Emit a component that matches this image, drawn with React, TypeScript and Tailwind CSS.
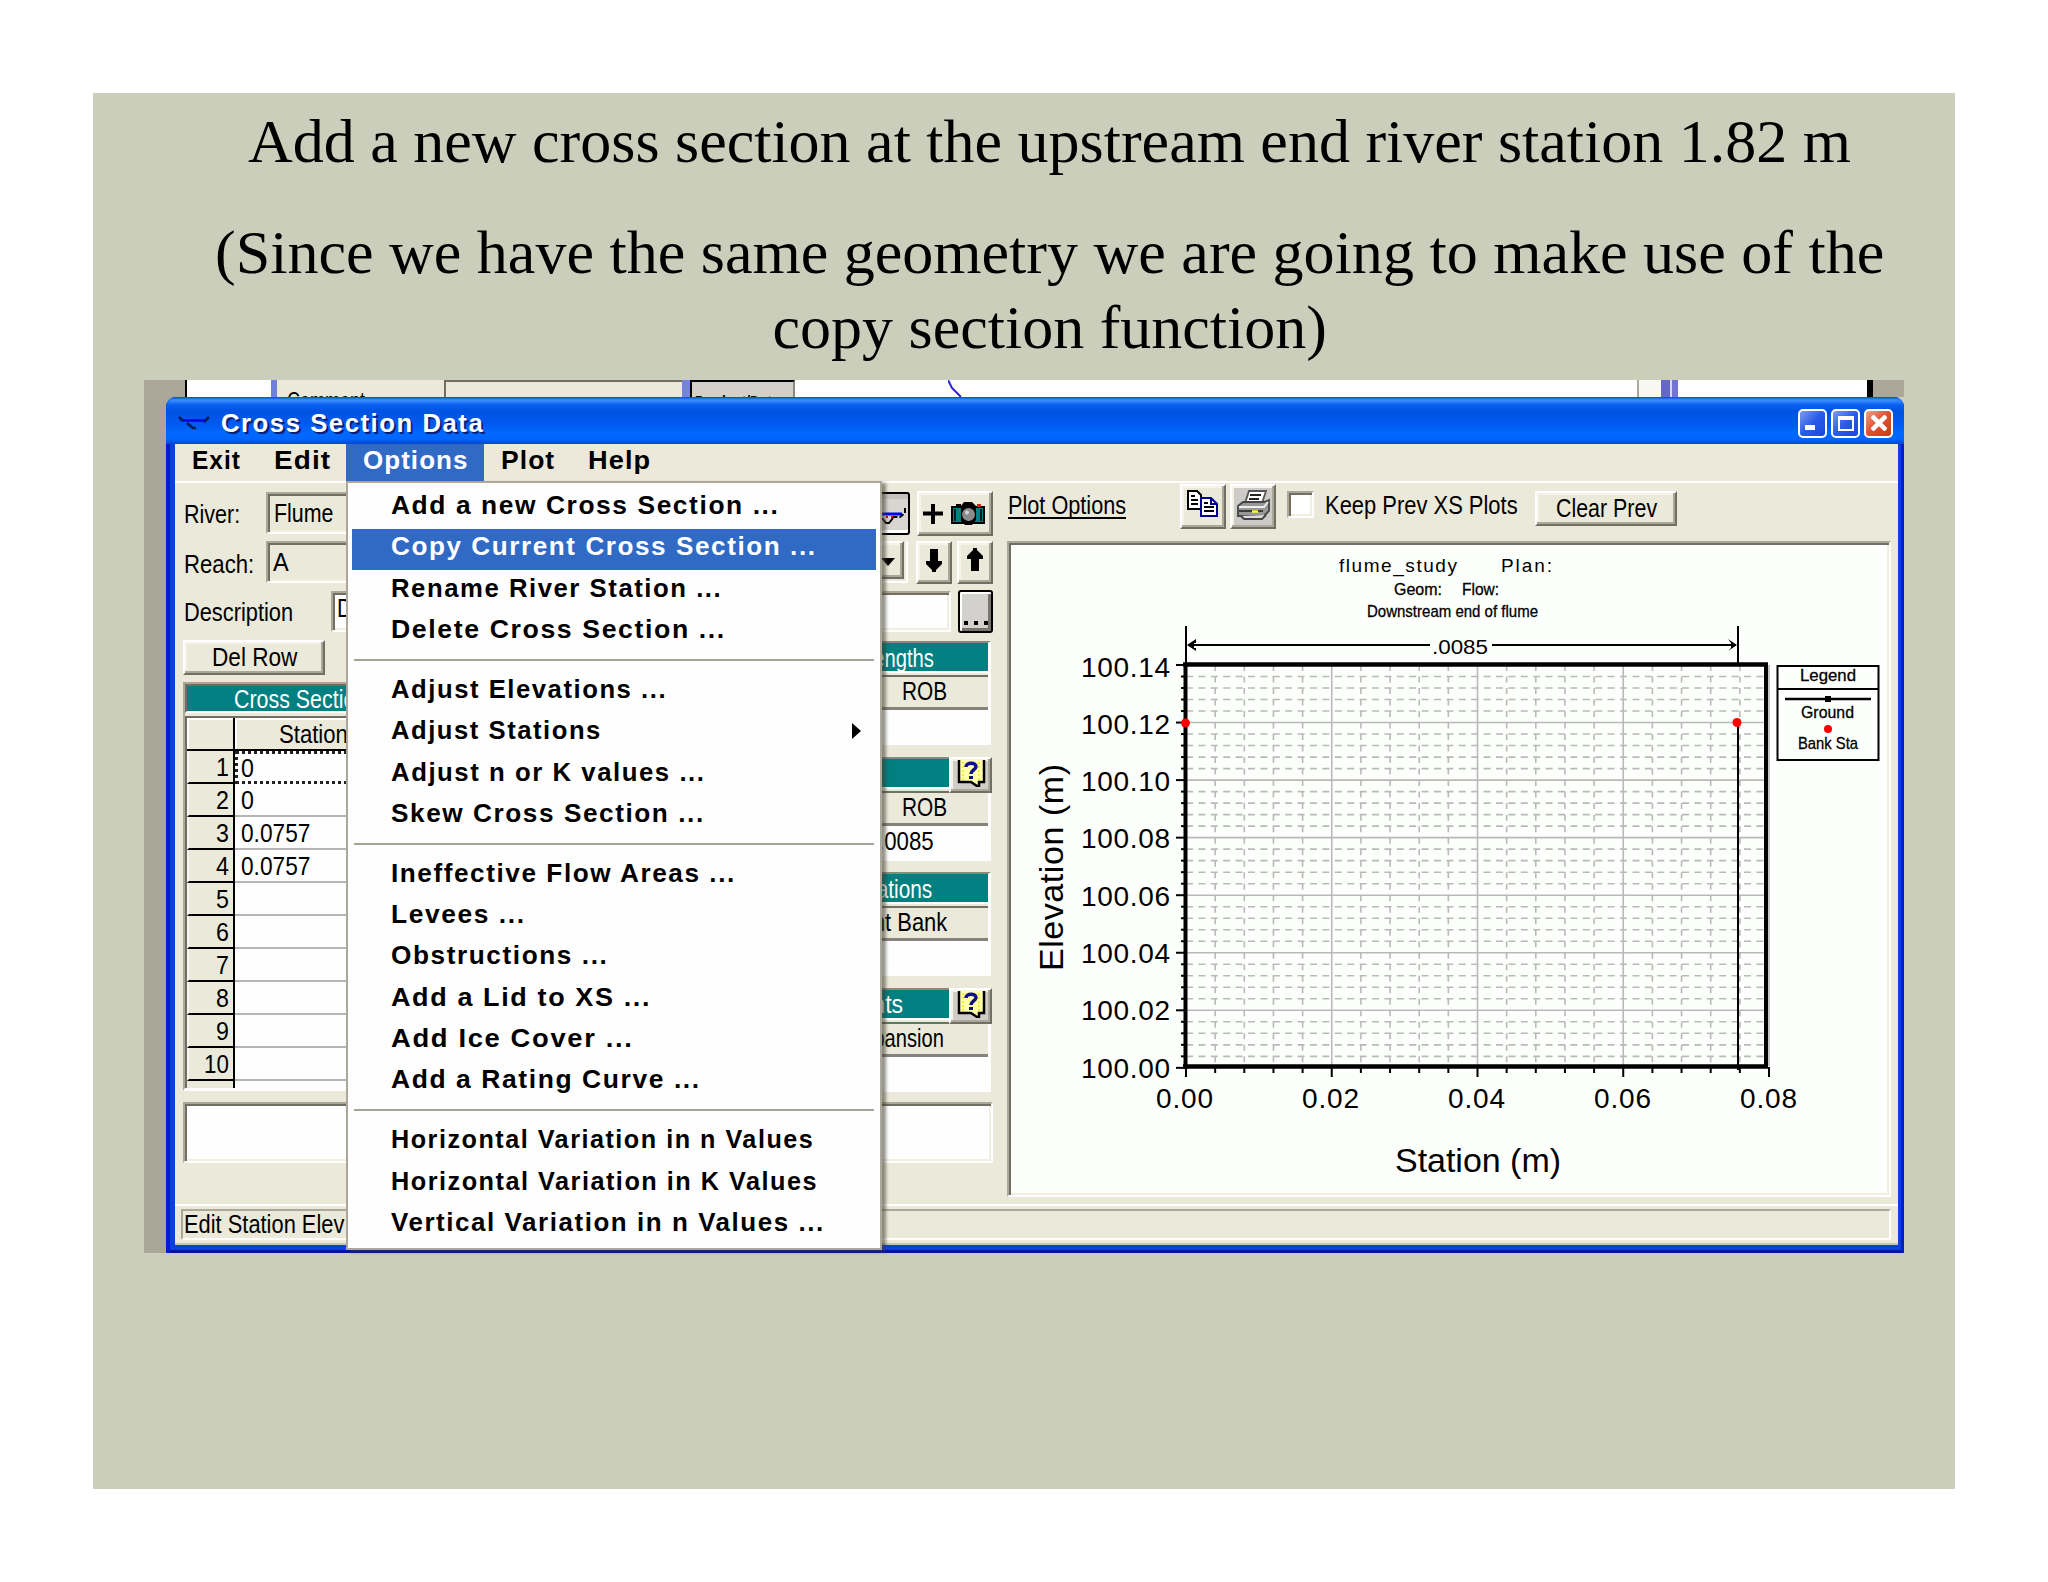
import React, { useLayoutEffect, useRef, useState } from 'react';

const sunken =
  'border-2 border-t-[#aca899] border-l-[#aca899] border-b-white border-r-white shadow-[inset_2px_2px_0_#716f64,inset_-2px_-2px_0_#f1efe2]';
const raised =
  'border-2 border-t-white border-l-white border-b-[#716f64] border-r-[#716f64] shadow-[inset_-2px_-2px_0_#aca899,inset_2px_2px_0_#f4f3e8]';

// Stretches one line of text to the width of its box
function Fit({ className, children }: { className: string; children: string }) {
  const box = useRef<HTMLSpanElement>(null);
  const inner = useRef<HTMLSpanElement>(null);
  const [scale, setScale] = useState(1);

  useLayoutEffect(() => {
    if (box.current && inner.current) {
      setScale(box.current.clientWidth / inner.current.offsetWidth);
    }
  }, []);

  return (
    <span ref={box} className={`block shrink-0 whitespace-pre leading-none ${className}`}>
      <span ref={inner} className="inline-block origin-left" style={{ transform: `scaleX(${scale})` }}>
        {children}
      </span>
    </span>
  );
}

const menuGroups = [
  [
    { label: 'Add a new Cross Section ...', width: 'w-[388px]' },
    { label: 'Copy Current Cross Section ...', width: 'w-[426px]', active: true },
    { label: 'Rename River Station ...', width: 'w-[331px]' },
    { label: 'Delete Cross Section ...', width: 'w-[335px]' },
  ],
  [
    { label: 'Adjust Elevations ...', width: 'w-[276px]' },
    { label: 'Adjust Stations', width: 'w-[211px]', submenu: true },
    { label: 'Adjust n or K values ...', width: 'w-[315px]' },
    { label: 'Skew Cross Section ...', width: 'w-[314px]' },
  ],
  [
    { label: 'Ineffective Flow Areas ...', width: 'w-[345px]' },
    { label: 'Levees ...', width: 'w-[135px]' },
    { label: 'Obstructions ...', width: 'w-[217px]' },
    { label: 'Add a Lid to XS ...', width: 'w-[260px]' },
    { label: 'Add Ice Cover ...', width: 'w-[242px]' },
    { label: 'Add a Rating Curve ...', width: 'w-[310px]' },
  ],
  [
    { label: 'Horizontal Variation in n Values', width: 'w-[423px]' },
    { label: 'Horizontal Variation in K Values', width: 'w-[427px]' },
    { label: 'Vertical Variation in n Values ...', width: 'w-[434px]' },
  ],
];

function OptionsMenu() {
  return (
    <div className="absolute left-[180px] top-[84px] h-[769px] w-[536px] border-2 border-[#aca899] bg-[#fefefe] px-[4px] pt-[4.500px] shadow-[4px_2px_3px_rgba(60,60,50,0.55)]">
      {menuGroups.map((group, i) => (
        <div key={i}>
          {i > 0 && (
            <div className="flex h-[18.7px] items-center px-[2px] pb-[4px]">
              <div className="h-[2px] w-full bg-[#a5a296]" />
            </div>
          )}
          {group.map((item) => (
            <div
              key={item.label}
              className={`flex h-[41.3px] items-center justify-between pb-[5px] pl-[39px] pr-[15px] text-[25px] font-bold tracking-[1.500px] ${item.active ? 'bg-[#316ac5] text-white' : 'text-black'}`}
            >
              <Fit className={item.width}>{item.label}</Fit>
              {item.submenu && (
                <svg width="9" height="16" viewBox="0 0 9 16">
                  <path d="M0 0L9 8L0 16Z" />
                </svg>
              )}
            </div>
          ))}
        </div>
      ))}
    </div>
  );
}

// Slice of the window that lies behind this one
function BackWindow() {
  return (
    <div className="flex h-[17px] w-full overflow-hidden bg-[#aca899] text-[24px]">
      <div className="w-[41px]" />
      <div className="w-[2px] bg-black" />
      <div className="w-[84px] bg-white" />
      <div className="w-[6px] bg-[#6f80dd]" />
      <div className="flex w-[167px] items-start bg-[#ebe9da] pl-[10px] pt-[9px]">
        <Fit className="w-[78px]">Comment</Fit>
      </div>
      <div className="w-[238px] border-l-2 border-t-2 border-[#716f64] bg-[#ebe9da]" />
      <div className="w-[8px] bg-[#7583dd]" />
      <div className="w-[105px] border-l-2 border-r-2 border-t-2 border-black border-r-[#8b897d] bg-[#d2d0c8] pl-[3px] pt-[11px] text-[20px] font-bold">
        <Fit className="w-[84px]">Product/Data</Fit>
      </div>
      <div className="w-[842px] bg-white pl-[153px]">
        <svg width="16" height="17" viewBox="0 0 16 17" fill="none">
          <path d="M0 0L4 8L13 17" stroke="#2a20d8" strokeWidth="2" />
        </svg>
      </div>
      <div className="w-[24px] border-l-2 border-[#aca899] bg-[#f8f8f2]" />
      <div className="w-[9px] bg-[#6468c8]" />
      <div className="w-[2px] bg-[#d8d8ec]" />
      <div className="w-[6px] bg-[#7474d4]" />
      <div className="w-[189px] bg-white" />
      <div className="w-[6px] bg-black" />
    </div>
  );
}

function TitleBar() {
  const button = 'flex h-[29px] w-[29px] items-center justify-center rounded-[5px] border-2 border-white';
  return (
    <div className="flex h-[47px] items-center rounded-t-[10px] bg-[linear-gradient(to_bottom,#0a4ad0_0,#3a90ff_3px,#0860f0_8px,#0053e1_14px,#0058ee_26px,#0068ff_36px,#0066fc_42px,#0046d0_47px)] pl-[12px] pr-[11px]">
      <svg width="32" height="14" viewBox="0 0 32 14" fill="none" stroke="#0a1b50" strokeWidth="2.500" className="mt-[5px]">
        <path d="M1 1L5 5M31 1L26 6M9 7L15 12H18" />
        <path d="M5 4.500H27" stroke="#0000e0" />
      </svg>
      <div className="ml-[11px] pt-[5px] text-[25px] font-bold tracking-[1.500px] text-white [text-shadow:2px_2px_0_#0a1f7a]">
        <Fit className="w-[263px]">Cross Section Data</Fit>
      </div>
      <div className="ml-auto flex gap-[4px] pt-[5px]">
        <div className={`${button} bg-[linear-gradient(135deg,#7f9cf0,#2a5be8_50%,#1848d8)]`}>
          <div className="mr-[6px] mt-[9px] h-[5px] w-[10px] bg-white" />
        </div>
        <div className={`${button} bg-[linear-gradient(135deg,#7f9cf0,#2a5be8_50%,#1848d8)]`}>
          <div className="h-[15px] w-[16px] border-2 border-t-4 border-white" />
        </div>
        <div className={`${button} bg-[linear-gradient(135deg,#f0a088,#e0502c_50%,#c83c18)]`}>
          <svg width="16" height="16" viewBox="0 0 16 16" stroke="#fff" strokeWidth="4.500">
            <path d="M1 1L15 15M15 1L1 15" />
          </svg>
        </div>
      </div>
    </div>
  );
}

function MenuBar() {
  return (
    <div className="flex h-[39px] items-start border-b-2 border-white bg-[#ece8da] text-[25px] font-bold tracking-[1px]">
      <Fit className="ml-[17px] mt-[4px] w-[49px]">Exit</Fit>
      <Fit className="ml-[33px] mt-[4px] w-[57px]">Edit</Fit>
      <div className="ml-[15px] h-[37px] w-[138px] bg-[#316ac5] pl-[17px] pt-[4px] text-white">
        <Fit className="w-[105px]">Options</Fit>
      </div>
      <Fit className="ml-[17px] mt-[4px] w-[54px]">Plot</Fit>
      <Fit className="ml-[33px] mt-[4px] w-[63px]">Help</Fit>
    </div>
  );
}

function HelpButton() {
  return (
    <div className={`flex h-[36px] w-[43px] shrink-0 items-start justify-center bg-[#cfcdc6] pt-px ${raised}`}>
      <svg width="30" height="27" viewBox="0 0 30 27">
        <path d="M3 0V22H15L21 26H23V22H28V0" fill="#fffbb0" stroke="#000" strokeWidth="2.500" />
        <path d="M5 1V20H16L21 24V20H25V1Z" fill="#ffffa8" />
        <path d="M7 2V20M23 2V20" stroke="#f0ec40" strokeWidth="2" strokeDasharray="2 2" />
        <path d="M10 7C10 2 20 2 20 6.500C20 10 15 10 15 14" fill="none" stroke="#10108a" strokeWidth="3.500" />
        <path d="M13 16H17V19H13Z" fill="#10108a" />
      </svg>
    </div>
  );
}

interface ValuePanelProps {
  title?: React.ReactNode;
  label: React.ReactNode;
  value?: React.ReactNode;
  help?: boolean;
}

function ValuePanel({ title, label, value, help }: ValuePanelProps) {
  return (
    <div className="relative h-[104px] w-[382px] border-b-[3px] border-r-[3px] border-t-2 border-b-white border-r-white border-t-[#8b897d]">
      <div className="flex h-[30px] items-center justify-end border-b-2 border-white bg-[#008080] pt-[2px] text-[25px] text-white">
        {title}
      </div>
      <div className="mt-[2px] flex h-[32px] items-center justify-end border-t-2 border-[#716f64] pb-px text-[25px]">{label}</div>
      <div className="flex h-[35px] items-center justify-end border-t-[3px] border-[#86847a] bg-[#fefefe] text-[25px]">
        {value}
      </div>
      {help && (
        <div className="absolute -right-[4px] -top-[2px]">
          <HelpButton />
        </div>
      )}
    </div>
  );
}

const stations = ['0', '0', '0.0757', '0.0757', '', '', '', '', '', ''];

function StationGrid() {
  return (
    <div className="mt-[7px] h-[409px] w-[400px] overflow-hidden border-b-[3px] border-l-2 border-t-2 border-b-white border-l-[#aca899] border-t-[#aca899] text-[25px]">
      <div className="flex h-[29px] items-center border-b-2 border-l-2 border-t-2 border-b-white border-l-[#716f64] border-t-[#716f64] bg-[#008080] pl-[47px] pt-[2px] text-white">
        <Fit className="w-[184px]">Cross Section Data</Fit>
      </div>
      <div className="mt-[3px] h-[373px] overflow-hidden border-l-2 border-t-2 border-[#716f64]">
        <div className="flex h-[33px] border-b-2 border-black">
          <div className="w-[46px] border-l-2 border-t-2 border-white" />
          <div className="w-[2px] bg-black" />
          <div className="flex grow items-center border-l-2 border-t-2 border-white pl-[42px]">
            <Fit className="w-[69px]">Station</Fit>
          </div>
        </div>
        {stations.map((value, i) => (
          <div key={i} className="flex h-[33px]">
            <div className="flex w-[46px] items-center justify-end border-b-2 border-l-2 border-black border-l-[#f6f5ee] pr-[4px] pt-px">
              <Fit className={i === 9 ? 'w-[25px]' : 'w-[13px]'}>{String(i + 1)}</Fit>
            </div>
            <div className="w-[2px] bg-black" />
            <div
              className={`flex grow items-center bg-[#fefefe] pt-px ${i === 0 ? 'border-[3px] border-dotted border-[#222] pl-[3px]' : 'border-b-2 border-[#b5b5b5] pl-[6px]'}`}
            >
              {value && <Fit className={value === '0' ? 'w-[13px]' : 'w-[69px]'}>{value}</Fit>}
            </div>
          </div>
        ))}
        <div className="flex h-[12px]">
          <div className="w-[46px]" />
          <div className="w-[2px] bg-black" />
          <div className="grow bg-[#fefefe]" />
        </div>
      </div>
    </div>
  );
}

function CameraButton() {
  return (
    <div className={`h-[45px] w-[76px] ${raised}`}>
      <svg width="72" height="41" viewBox="0 0 72 41">
        <path d="M4 20.500H24M14 11V31" stroke="#000" strokeWidth="4" />
        <path d="M33 14H65V30H33Z" fill="#008080" stroke="#000" strokeWidth="2" />
        <path d="M37 11H42V14H37Z" fill="#000" />
        <path d="M58 11H62V14H58Z" fill="#e01818" />
        <path d="M42 13L45 9H53L57 13V27L53 32H46L42 28Z" fill="#000" />
        <circle cx="49.500" cy="21.500" r="6.500" fill="#8b8b8b" />
        <circle cx="48" cy="19.500" r="2" fill="#d6d6d6" />
        <path d="M36 16V28M62 16V28" stroke="#000" strokeWidth="1.500" />
      </svg>
    </div>
  );
}

function ArrowButton({ up }: { up?: boolean }) {
  return (
    <div className={`flex h-[43px] w-[36px] justify-center ${raised} ${up ? 'pt-[4px]' : 'pt-[6px]'}`}>
      <svg width="18" height="24" viewBox="0 0 18 24" className={up ? 'rotate-180' : ''}>
        <path d="M5 0H13V12H17V15L11 21V23H7V21L1 15V12H5Z" />
      </svg>
    </div>
  );
}

function EditorPane() {
  return (
    <div className="w-[810px] pt-[8px]">
      <div className="flex h-[45px] text-[25px]">
        <div className="w-[83px] pl-px pt-[11px]">
          <Fit className="w-[56px]">River:</Fit>
        </div>
        <div className={`mt-px flex h-[42px] w-[300px] items-center pl-[6px] pt-px ${sunken}`}>
          <Fit className="w-[59px]">Flume</Fit>
        </div>
        <div className="ml-auto mr-[7px] mt-px h-[43px] w-[60px] rounded-[3px] border-2 border-black bg-[#d6d5cf] shadow-[inset_0_5px_0_#c4c3be,inset_0_-3px_0_#fff]">
          <svg width="56" height="39" viewBox="0 0 56 39" fill="none">
            <path d="M8 20H50" stroke="#0000e8" strokeWidth="3" />
            <path d="M53 14V19L48 23H40" stroke="#000" strokeWidth="2" strokeDasharray="5 2" />
            <path d="M30 24L34 29H37L41 24" stroke="#000" strokeWidth="2" />
            <path d="M34 23H41" stroke="#e00000" strokeWidth="2" strokeDasharray="2 3" />
          </svg>
        </div>
        <CameraButton />
      </div>
      <div className="mt-[5px] flex h-[43px] text-[25px]">
        <div className="w-[83px] pl-px pt-[11px]">
          <Fit className="w-[70px]">Reach:</Fit>
        </div>
        <div className={`flex h-[42px] w-[300px] items-center pl-[5px] pt-px ${sunken}`}>
          <Fit className="w-[16px]">A</Fit>
        </div>
        <div className="ml-auto mr-[8px] h-[42px] w-[62px] border-b-2 border-r-2 border-white">
          <div className={`flex h-[38px] w-[58px] items-center justify-end pr-[7px] pt-[4px] ${raised}`}>
            <svg width="14" height="8" viewBox="0 0 14 8">
              <path d="M0 0H14L7 8Z" />
            </svg>
          </div>
        </div>
        <ArrowButton />
        <div className="w-[5px]" />
        <ArrowButton up />
      </div>
      <div className="mt-[6px] flex h-[43px] text-[25px]">
        <div className="w-[148px] pl-px pt-[10px]">
          <Fit className="w-[109px]">Description</Fit>
        </div>
        <div className={`mt-px flex h-[41px] w-[620px] items-center bg-[#fefefe] pb-[6px] pl-[4px] ${sunken}`}>
          <Fit className="w-[120px]">Downstream</Fit>
        </div>
        <div className="ml-auto flex h-[43px] w-[35px] items-end justify-center gap-[6px] rounded-[3px] border-2 border-black bg-[#d2d1ce] pb-[6px] shadow-[inset_2px_2px_0_#fff,inset_-3px_-3px_0_#77756c]">
          <div className="h-[4px] w-[4px] bg-black" />
          <div className="h-[4px] w-[4px] bg-black" />
          <div className="h-[4px] w-[4px] bg-black" />
        </div>
      </div>
      <div className="mt-[7px] flex h-[452px] justify-between">
        <div>
          <div className={`flex h-[35px] w-[142px] items-center justify-center text-[25px] ${raised}`}>
            <Fit className="w-[85px]">Del Row</Fit>
          </div>
          <StationGrid />
        </div>
        <div className="flex flex-col gap-[11.500px] pr-[2px] pt-px">
          <ValuePanel
            title={<Fit className="mr-[54px] w-[72px]">Lengths</Fit>}
            label={<Fit className="mr-[41px] w-[45px]">ROB</Fit>}
          />
          <ValuePanel
            help
            label={<Fit className="mr-[41px] w-[45px]">ROB</Fit>}
            value={<Fit className="mr-[54px] w-[56px]">.0085</Fit>}
          />
          <ValuePanel
            title={<Fit className="mr-[56px] w-[75px]">Stations</Fit>}
            label={<Fit className="mr-[41px] w-[107px]">Right Bank</Fit>}
          />
          <ValuePanel
            help
            title={<Fit className="mr-[85px] w-[120px]">Coefficients</Fit>}
            label={<Fit className="mr-[44px] w-[94px]">Expansion</Fit>}
          />
        </div>
      </div>
      <div className={`mt-[10px] h-[61px] bg-[#fefefe] ${sunken}`} />
    </div>
  );
}

const yLabels = ['100.14', '100.12', '100.10', '100.08', '100.06', '100.04', '100.02', '100.00'];
const xLabels = ['0.00', '0.02', '0.04', '0.06', '0.08'];
const X0 = 1186;
const Y0 = 665;
const DX = 29.150;
const DY = 11.510;

function CrossSectionChart() {
  const cols = Array.from({ length: 20 }, (_, i) => i + 1);
  const rows = Array.from({ length: 34 }, (_, i) => i + 1);
  return (
    <svg
      width="876"
      height="648"
      viewBox="1011 545 876 648"
      fontFamily="'Liberation Sans', Arial, sans-serif"
      className="block"
    >
      <g stroke="#b9b9b9" strokeWidth="1.600">
        {rows.map((i) => (
          <line
            key={`r${i}`}
            x1={X0}
            x2={1766}
            y1={Y0 + i * DY}
            y2={Y0 + i * DY}
            strokeDasharray={i % 5 ? '7 5.400' : undefined}
          />
        ))}
        {cols.map((i) => (
          <line
            key={`c${i}`}
            x1={X0 + i * DX}
            x2={X0 + i * DX}
            y1={Y0}
            y2={1066}
            strokeDasharray={i % 5 ? '6 5.510' : undefined}
          />
        ))}
      </g>
      <g stroke="#000">
        <path d="M1183 664.500H1768M1183 1066.500H1768" strokeWidth="4.500" />
        <path d="M1185.500 663V1069M1766 663V1068" strokeWidth="4" />
        {Array.from({ length: 36 }, (_, i) => (
          <line key={i} x1={i % 5 ? 1181 : 1176} x2={1186} y1={Y0 + i * DY} y2={Y0 + i * DY} strokeWidth="2" />
        ))}
        {Array.from({ length: 21 }, (_, i) => (
          <line key={i} x1={X0 + i * DX} x2={X0 + i * DX} y1={1067} y2={i % 5 ? 1073 : 1077} strokeWidth="2" />
        ))}
        <path d="M1186 626V664M1738 626V664M1738 723V1070" strokeWidth="2" />
        <path d="M1188 645H1430M1492 645H1736" strokeWidth="2" />
      </g>
      <path d="M1187 645L1196 639V643H1194V648H1196V651ZM1737 645L1728 639L1731 643V648L1728 651Z" />
      <circle cx="1185.500" cy="723" r="4.500" fill="#f00" />
      <circle cx="1737" cy="722.500" r="4.500" fill="#f00" />

      <text x="1339" y="571.500" fontSize="19" textLength="118">flume_study</text>
      <text x="1501" y="571.500" fontSize="19" textLength="51">Plan:</text>
      <g fontSize="17" stroke="#000" strokeWidth="0.300">
        <text x="1394" y="595" textLength="48" lengthAdjust="spacingAndGlyphs">Geom:</text>
        <text x="1462" y="595" textLength="37" lengthAdjust="spacingAndGlyphs">Flow:</text>
        <text x="1367" y="617" textLength="171" lengthAdjust="spacingAndGlyphs">Downstream end of flume</text>
      </g>
      <text x="1432" y="653.500" fontSize="20" textLength="56" lengthAdjust="spacingAndGlyphs">.0085</text>

      {yLabels.map((label, i) => (
        <text key={label} x="1081" y={676.500 + i * 57.300} fontSize="28" textLength="89">{label}</text>
      ))}
      {xLabels.map((label, i) => (
        <text key={label} x={1156 + i * 146} y="1107.500" fontSize="28" textLength="57">{label}</text>
      ))}
      <text x="1395" y="1171.500" fontSize="34" textLength="166">Station (m)</text>
      <text transform="translate(1063 971) rotate(-90)" fontSize="34" textLength="207">Elevation (m)</text>

      <g fill="none" stroke="#000" strokeWidth="2">
        <path d="M1777.500 666H1878.500V760H1777.500ZM1777.500 689H1878.500" />
        <path d="M1785 699H1871" strokeWidth="2.500" />
      </g>
      <path d="M1825 696H1831V702H1825Z" />
      <circle cx="1828" cy="729" r="4" fill="#f00" />
      <g fontSize="17" stroke="#000" strokeWidth="0.300">
        <text x="1800" y="681" textLength="56" lengthAdjust="spacingAndGlyphs">Legend</text>
        <text x="1801" y="718" textLength="53" lengthAdjust="spacingAndGlyphs">Ground</text>
        <text x="1798" y="749" textLength="60" lengthAdjust="spacingAndGlyphs">Bank Sta</text>
      </g>
    </svg>
  );
}

function PlotPane() {
  return (
    <div className="w-[884px]">
      <div className="flex h-[58px] items-start text-[25px]">
        <div className="ml-px mt-[10px] h-[26px] w-[118px] border-b-2 border-black">
          <Fit className="w-[118px]">Plot Options</Fit>
        </div>
        <div className={`ml-[54px] mt-px h-[45px] w-[46px] pl-[4px] pt-[4px] ${raised}`}>
          <svg width="34" height="30" viewBox="0 0 34 30" fill="#fff" strokeWidth="2">
            <path d="M2 1H11L15 5V19H2Z" stroke="#000" />
            <path d="M5 6H9M5 10H12M5 14H12" stroke="#000" />
            <path d="M15 8H25L31 14V26H15Z" stroke="#000090" />
            <path d="M25 8V14H31" stroke="#000090" fill="none" />
            <path d="M18 13H22M18 17H28M18 21H28" stroke="#000" />
          </svg>
        </div>
        <div className={`ml-[4px] mt-px h-[45px] w-[46px] bg-[#cdcbc7] pl-[4px] pt-[4px] ${raised}`}>
          <svg width="34" height="30" viewBox="0 0 34 30" strokeWidth="1.800">
            <path d="M9 13L13 1H30L26 13Z" fill="#fff" stroke="#555" />
            <path d="M14 5H25M13 9H23" stroke="#222" />
            <path d="M2 16L7 12H28L33 10V21L28 26H2Z" fill="#989898" stroke="#444" />
            <path d="M3 17H28L32 12" fill="none" stroke="#eee" />
            <path d="M3 21H27" stroke="#333" />
            <path d="M16 21.500H22" stroke="#ffff20" strokeWidth="2.500" />
            <path d="M5 26L8 29H26L30 25" fill="#ddd" stroke="#444" />
          </svg>
        </div>
        <div className={`ml-[11px] mt-[8px] h-[27px] w-[27px] bg-white ${sunken}`} />
        <Fit className="ml-[11px] mt-[10px] w-[193px]">Keep Prev XS Plots</Fit>
        <div className={`ml-[17px] mt-[8px] flex h-[35px] w-[142px] items-center justify-center ${raised}`}>
          <Fit className="w-[101px]">Clear Prev</Fit>
        </div>
      </div>
      <div className={`h-[656px] overflow-hidden bg-[#fdfffc] pl-[2px] pt-[2px] ${sunken}`}>
        <CrossSectionChart />
      </div>
    </div>
  );
}

function CrossSectionWindow() {
  return (
    <div className="relative ml-[22px] h-[856px] w-[1738px] rounded-t-[10px] bg-[#0a3fe0] shadow-[inset_4px_0_0_#001cd0,inset_-3px_0_0_#001fc4,inset_0_-3px_0_#00159a]">
      <TitleBar />
      <div className="ml-[9px] mr-[6px] h-[801px] bg-[#ebe9da]">
        <MenuBar />
        <div className="flex h-[721px] gap-[14px] pl-[8px]">
          <EditorPane />
          <PlotPane />
        </div>
        <div className="h-[41px] border-b-2 border-t-2 border-b-[#c8c5b4] border-t-white pl-[6px] pr-[7px] pt-[3px]">
          <div className="flex h-[31px] items-center border-2 border-b-white border-l-[#aca899] border-r-white border-t-[#aca899] pl-px text-[25px]">
            <Fit className="w-[160px]">Edit Station Elev</Fit>
          </div>
        </div>
      </div>
      <OptionsMenu />
    </div>
  );
}

export default function App() {
  return (
    <main className="h-[1582px] w-[2048px] overflow-hidden bg-white pl-[93px] pt-[93px] font-['Liberation_Sans',Arial,sans-serif] text-black">
      <div className="h-[1396px] w-[1862px] bg-[#cccebc]">
        <header className="flex h-[287px] flex-col items-center pl-[51px] pt-[17px] font-['Liberation_Serif','Times_New_Roman',serif] text-[62px]">
          <Fit className="h-[111px] w-[1603px]">Add a new cross section at the upstream end river station 1.82 m</Fit>
          <Fit className="h-[75px] w-[1669px]">(Since we have the same geometry we are going to make use of the</Fit>
          <Fit className="w-[554px]">copy section function)</Fit>
        </header>
        <section className="ml-[51px] h-[873px] w-[1760px] bg-[linear-gradient(to_right,#a9a797_30px,#cccebc_30px)]">
          <BackWindow />
          <CrossSectionWindow />
        </section>
      </div>
    </main>
  );
}
